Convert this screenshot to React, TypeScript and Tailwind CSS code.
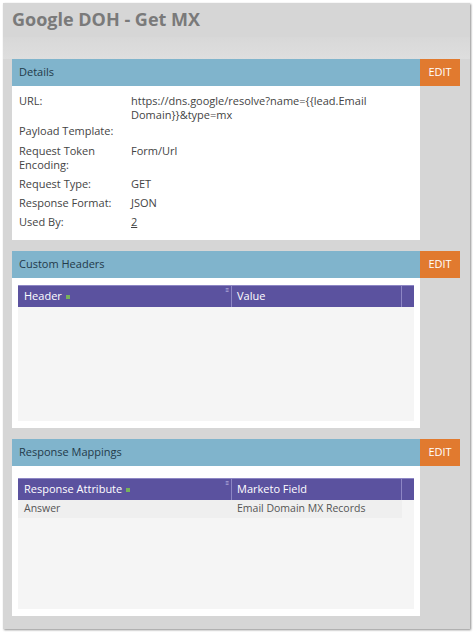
import React from "react";

const font = { fontFamily: '"Open Sans", "Noto Sans", sans-serif' };

function SectionBar({ title }: { title: string }) {
  return (
    <div className="flex h-[27px]">
      <div className="flex w-[408px] items-center bg-[#80b4cc] pl-[7px] text-[11px] text-[#233a4a]">{title}</div>
      <div className="flex w-[40px] items-center justify-center bg-[#e17a2f] text-[11px] text-white">EDIT</div>
    </div>
  );
}

function Grid({ c1, c2, rows }: { c1: string; c2: string; rows: [string, string][] }) {
  return (
    <div className="flex h-[136px] flex-col bg-[#f5f5f5]">
      <div className="flex h-[22px] border-t border-[#8d86c4] bg-[#5b529f] text-[11px] text-white">
        <div className="relative flex w-[214px] items-center border-r border-[#8d86c4] pl-[6px]">
          {c1}
          <span className="ml-[4px] inline-block h-[4px] w-[4px] bg-[#77b25c]" />
          <span className="absolute right-[2px] top-[1px] text-[6px] leading-[6px] text-[#c9c5ea]">≡</span>
        </div>
        <div className="flex w-[170px] items-center border-r border-[#8d86c4] pl-[5px]">{c2}</div>
        <div className="flex-1" />
      </div>
      {rows.map((r, i) => (
        <div key={i} className="flex h-[18px] text-[10.5px] text-[#555]">
          <div className="flex w-[214px] items-center bg-[#efefef] pl-[6px]">{r[0]}</div>
          <div className="flex w-[170px] items-center bg-[#efefef] pl-[5px]">{r[1]}</div>
          <div className="flex-1" />
        </div>
      ))}
    </div>
  );
}

function Row({ label, value, h }: { label: React.ReactNode; value: React.ReactNode; h: string }) {
  return (
    <div className={`flex ${h} text-[11px] leading-[14px] text-[#444]`}>
      <div className="w-[112px]">{label}</div>
      <div className="flex-1">{value}</div>
    </div>
  );
}

export default function App() {
  return (
    <div className="h-[632px] w-[474px] bg-white p-[3px]" style={font}>
      <div className="h-[626px] w-[467px] bg-[#d6d6d6] shadow-[1px_1px_2px_rgba(0,0,0,0.45)]">
        <div className="h-[34px] bg-[#d6d6d6] pl-[9px] pt-[5px] text-[18px] font-bold leading-[22px] text-[#7a7a7a]">
          Google DOH - Get MX
        </div>
        <div className="h-[22px] bg-gradient-to-b from-[#d8d8d8] to-[#dedede]" />
        <div className="px-[9px]">
          <SectionBar title="Details" />
          <div className="h-[154px] w-[408px] bg-white pl-[7px] pt-[8px]">
            <Row h="h-[30px]" label="URL:" value={<>https://dns.google/resolve?name={"{{"}lead.Email<br />Domain{"}}"}&amp;type=mx</>} />
            <Row h="h-[20px]" label="Payload Template:" value="" />
            <Row h="h-[33px]" label={<>Request Token<br />Encoding:</>} value="Form/Url" />
            <Row h="h-[19px]" label="Request Type:" value="GET" />
            <Row h="h-[19px]" label="Response Format:" value="JSON" />
            <Row h="h-[19px]" label="Used By:" value={<span className="underline">2</span>} />
          </div>
          <div className="h-[11px]" />
          <SectionBar title="Custom Headers" />
          <div className="h-[150px] w-[408px] bg-white px-[6px] pt-[7px]">
            <Grid c1="Header" c2="Value" rows={[]} />
          </div>
          <div className="h-[11px]" />
          <SectionBar title="Response Mappings" />
          <div className="h-[150px] w-[408px] bg-white px-[6px] pt-[12px]">
            <div className="h-[131px] overflow-hidden">
              <Grid c1="Response Attribute" c2="Marketo Field" rows={[["Answer", "Email Domain MX Records"]]} />
            </div>
          </div>
        </div>
      </div>
    </div>
  );
}
